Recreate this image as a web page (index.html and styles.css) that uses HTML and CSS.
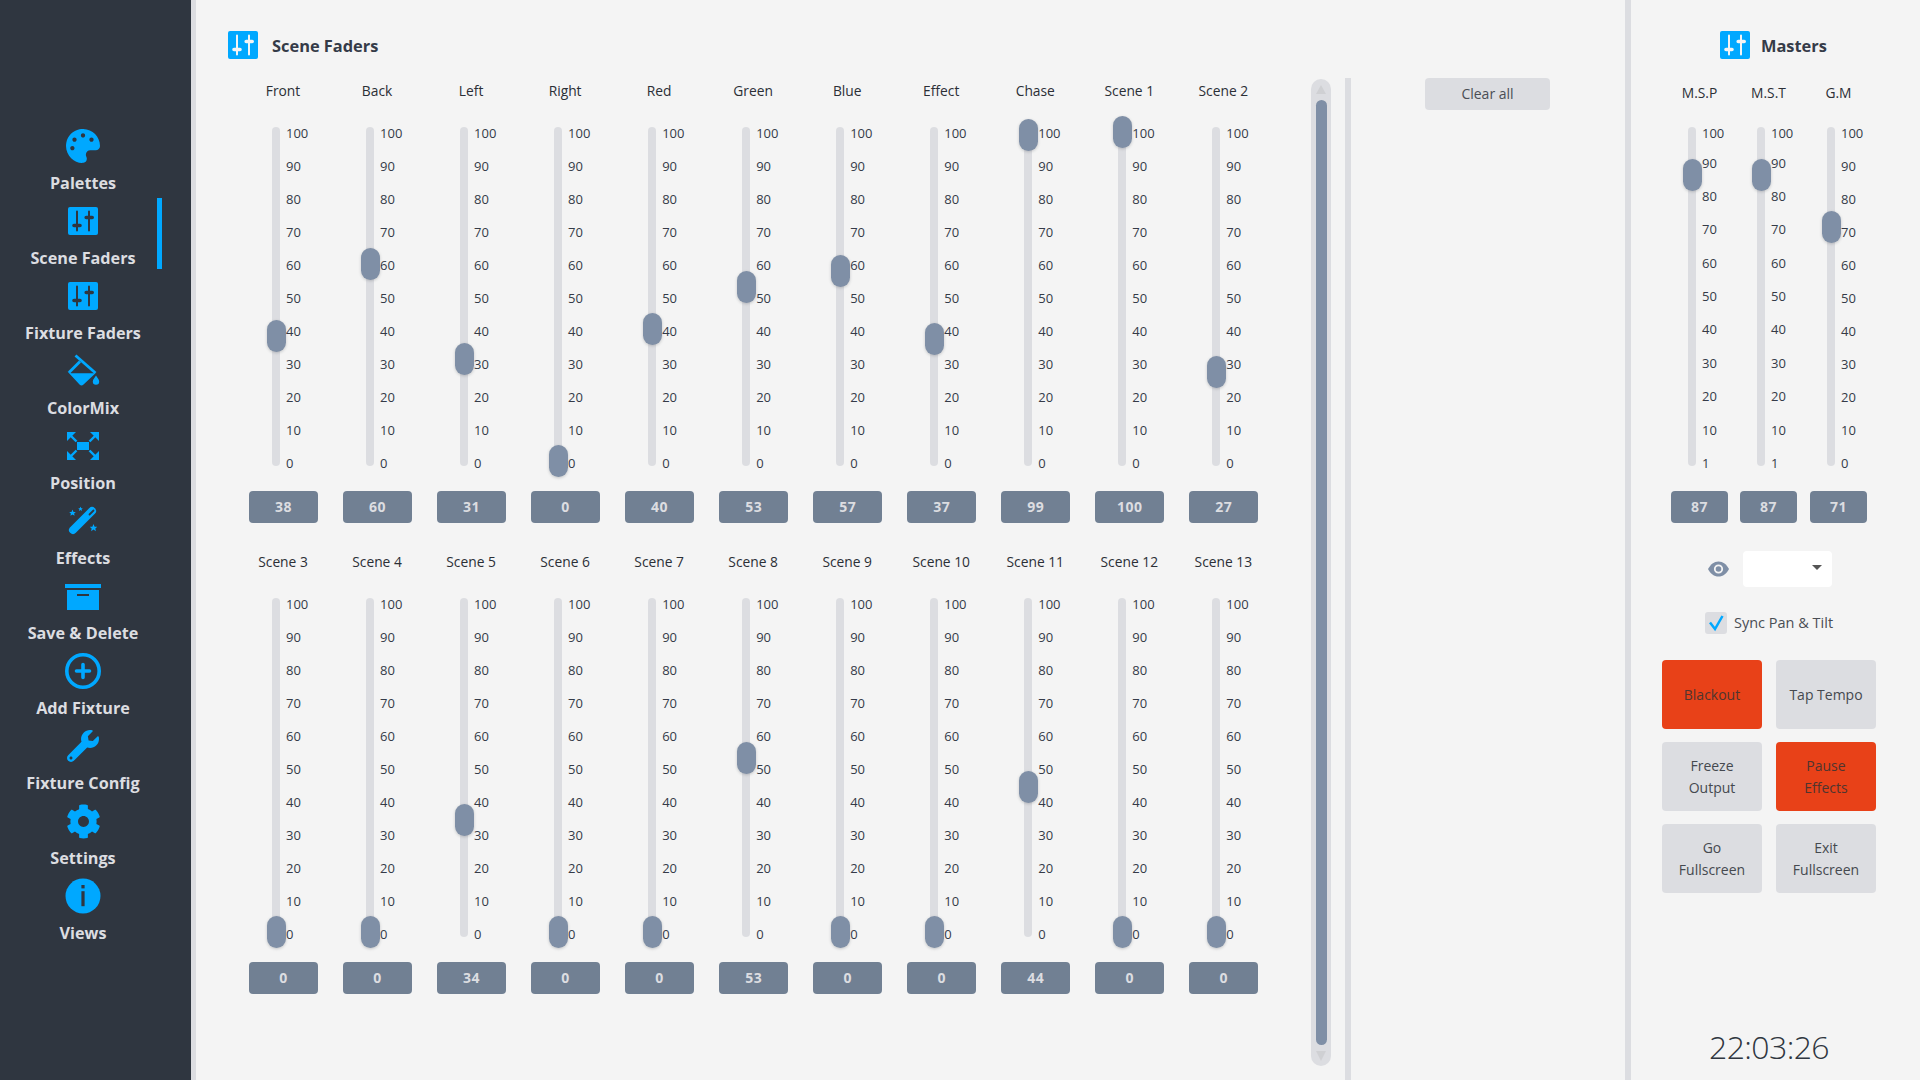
FILE: index.html
```html
<!DOCTYPE html>
<html lang="en">
<head>
<meta charset="utf-8">
<title>Scene Faders</title>
<link rel="stylesheet" href="styles.css">
</head>
<body>
<svg class="defs" width="0" height="0" aria-hidden="true">
  <symbol id="sliders" viewBox="0 0 30 28">
    <rect width="30" height="28" rx="2" fill="#00a8ff"/>
    <g fill="none" stroke="currentColor" stroke-linecap="round">
      <path d="M9 4.500v19M21 4.500v19" stroke-width="2"/>
      <path d="M6 18.500h6M18.200 10.500h6" stroke-width="3.600"/>
    </g>
  </symbol>
  <symbol id="star" viewBox="-1 -1 2 2">
    <polygon points="0,-1 .29,-.31 .95,-.31 .47,.12 .59,.81 0,.4 -.59,.81 -.47,.12 -.95,-.31 -.29,-.31"/>
  </symbol>
</svg>
<div class="app">
  <aside class="sidebar">
    <nav class="nav">
      <a class="nav-item"><span class="nav-icon"><svg width="34" height="34" viewBox="0 0 512 512"><path d="M204.300 5C104.900 24.400 24.800 104.300 5.200 203.400c-37 187 131.700 326.400 258.800 306.700 41.200-6.400 61.400-54.600 42.500-91.700-23.100-45.400 9.900-98.400 60.900-98.400h79.700c35.800 0 64.800-29.600 64.900-65.300C511.500 97.100 368.100-26.900 204.300 5zM96 320c-17.700 0-32-14.300-32-32s14.300-32 32-32 32 14.300 32 32-14.300 32-32 32zm32-128c-17.700 0-32-14.300-32-32s14.300-32 32-32 32 14.300 32 32-14.300 32-32 32zm128-64c-17.700 0-32-14.300-32-32s14.300-32 32-32 32 14.300 32 32-14.300 32-32 32zm128 64c-17.700 0-32-14.300-32-32s14.300-32 32-32 32 14.300 32 32-14.300 32-32 32z"/></svg></span><span class="nav-label">Palettes</span></a>
      <a class="nav-item is-active"><span class="nav-icon on-dark"><svg width="30" height="28"><use href="#sliders"/></svg></span><span class="nav-label">Scene Faders</span></a>
      <a class="nav-item"><span class="nav-icon on-dark"><svg width="30" height="28"><use href="#sliders"/></svg></span><span class="nav-label">Fixture Faders</span></a>
      <a class="nav-item"><span class="nav-icon"><svg width="36" height="36" viewBox="5 3 36 36"><path d="M15.500 5.500L35.500 23" fill="none" stroke="#00a8ff" stroke-width="2.800"/><path d="M9 22.500L20 11.500" fill="none" stroke="#00a8ff" stroke-width="2.800"/><path d="M7.500 21.500L11 23.200h24.500L23.500 34.500a3 3 0 0 1-4 0z"/><path d="M36 25.500c1.500 2.500 3.200 4 3.200 6a3.200 3.200 0 0 1-6.400 0c0-2 1.700-3.500 3.200-6z"/></svg></span><span class="nav-label">ColorMix</span></a>
      <a class="nav-item"><span class="nav-icon"><svg width="36" height="36" viewBox="-18 -18 36 36"><rect x="-6" y="-4" width="12" height="8"/><polygon points="-16,-14 -7,-14 -16,-5"/><path d="M-13-11l6.500 6.500" stroke="#00a8ff" stroke-width="2.400"/><polygon points="16,-14 7,-14 16,-5"/><path d="M13-11l-6.500 6.500" stroke="#00a8ff" stroke-width="2.400"/><polygon points="-16,14 -7,14 -16,5"/><path d="M-13 11l6.500-6.500" stroke="#00a8ff" stroke-width="2.400"/><polygon points="16,14 7,14 16,5"/><path d="M13 11l-6.500-6.500" stroke="#00a8ff" stroke-width="2.400"/></svg></span><span class="nav-label">Position</span></a>
      <a class="nav-item"><span class="nav-icon"><svg width="36" height="36" viewBox="5 3 36 36"><path d="M13 30L32 11" stroke="#00a8ff" stroke-width="8" stroke-linecap="round"/><path d="M29.500 14.500l4-4" stroke="#2f3640" stroke-width="1.800" stroke-linecap="round"/><use href="#star" x="9" y="9.500" width="7" height="7"/><use href="#star" x="18" y="6.500" width="5" height="5"/><use href="#star" x="29.500" y="24" width="8" height="8"/></svg></span><span class="nav-label">Effects</span></a>
      <a class="nav-item"><span class="nav-icon"><svg width="36" height="36" viewBox="-18 -18 36 36"><rect x="-18" y="-12" width="36" height="4"/><rect x="-16" y="-6" width="32" height="20"/><rect x="-6" y="-2" width="12" height="2" fill="#2f3640"/></svg></span><span class="nav-label">Save &amp; Delete</span></a>
      <a class="nav-item"><span class="nav-icon"><svg width="36" height="36" viewBox="-18 -18 36 36"><circle r="16.200" fill="none" stroke="#00a8ff" stroke-width="3.600"/><path d="M-6.500 0h13M0-6.500v13" stroke="#00a8ff" stroke-width="3.600" stroke-linecap="round"/></svg></span><span class="nav-label">Add Fixture</span></a>
      <a class="nav-item"><span class="nav-icon"><svg width="32" height="32" viewBox="0 0 512 512"><path d="M507.730 109.100c-2.240-9.030-13.540-12.090-20.120-5.510l-74.360 74.360-67.880-11.310-11.310-67.880 74.360-74.360c6.620-6.620 3.430-17.900-5.660-20.160-47.380-11.740-99.550.91-136.580 37.930-39.640 39.640-50.550 97.100-34.050 147.200L18.740 402.760c-24.990 24.990-24.990 65.510 0 90.500 24.990 24.990 65.510 24.990 90.500 0l213.210-213.210c50.120 16.710 107.470 5.680 147.370-34.220 37.070-37.070 49.700-89.320 37.910-136.730zM64 472c-13.250 0-24-10.750-24-24 0-13.260 10.750-24 24-24s24 10.740 24 24c0 13.250-10.750 24-24 24z"/></svg></span><span class="nav-label">Fixture Config</span></a>
      <a class="nav-item"><span class="nav-icon"><svg width="35" height="35" viewBox="0 0 512 512"><path d="M487.400 315.700l-42.600-24.600c4.300-23.200 4.300-47 0-70.200l42.600-24.600c4.900-2.800 7.100-8.600 5.500-14-11.100-35.600-30-67.800-54.700-94.600-3.800-4.100-10-5.100-14.800-2.300L380.800 110c-17.900-15.400-38.500-27.300-60.800-35.100V25.800c0-5.600-3.900-10.500-9.400-11.700-36.700-8.200-74.300-7.800-109.200 0-5.500 1.200-9.400 6.100-9.400 11.700V75c-22.200 7.900-42.800 19.800-60.800 35.100L88.700 85.500c-4.900-2.800-11-1.900-14.800 2.300-24.700 26.700-43.600 58.900-54.700 94.600-1.700 5.400.6 11.200 5.500 14L67.300 221c-4.300 23.200-4.300 47 0 70.200l-42.600 24.600c-4.900 2.800-7.100 8.600-5.500 14 11.100 35.600 30 67.800 54.700 94.600 3.800 4.100 10 5.100 14.800 2.300l42.600-24.600c17.900 15.400 38.500 27.300 60.800 35.100v49.200c0 5.600 3.900 10.500 9.400 11.700 36.700 8.200 74.300 7.800 109.200 0 5.500-1.200 9.400-6.100 9.400-11.700v-49.200c22.200-7.900 42.800-19.800 60.800-35.100l42.600 24.600c4.900 2.800 11 1.900 14.800-2.300 24.700-26.700 43.600-58.900 54.700-94.600 1.500-5.500-.7-11.300-5.600-14.100zM256 336c-44.100 0-80-35.900-80-80s35.900-80 80-80 80 35.900 80 80-35.900 80-80 80z"/></svg></span><span class="nav-label">Settings</span></a>
      <a class="nav-item"><span class="nav-icon"><svg width="36" height="36" viewBox="-18 -18 36 36"><circle r="17.500"/><rect x="-1.600" y="-11" width="3.200" height="3.400" fill="#2f3640"/><rect x="-1.600" y="-4.800" width="3.200" height="15" fill="#2f3640"/></svg></span><span class="nav-label">Views</span></a>
    </nav>
  </aside>

  <main class="main">
    <header class="pane-head">
      <svg class="head-icon" width="30" height="28"><use href="#sliders"/></svg>
      <h1 class="pane-title">Scene Faders</h1>
    </header>
    <div class="main-body">
      <div class="fader-grid">
        <section class="fader"><div class="fader-name">Front</div><div class="fader-body"><div class="track"><div class="rail"><span class="thumb" style="bottom:38%"></span></div></div><ol class="ticks"><li>100</li><li>90</li><li>80</li><li>70</li><li>60</li><li>50</li><li>40</li><li>30</li><li>20</li><li>10</li><li>0</li></ol></div><div class="value">38</div></section>
        <section class="fader"><div class="fader-name">Back</div><div class="fader-body"><div class="track"><div class="rail"><span class="thumb" style="bottom:60%"></span></div></div><ol class="ticks"><li>100</li><li>90</li><li>80</li><li>70</li><li>60</li><li>50</li><li>40</li><li>30</li><li>20</li><li>10</li><li>0</li></ol></div><div class="value">60</div></section>
        <section class="fader"><div class="fader-name">Left</div><div class="fader-body"><div class="track"><div class="rail"><span class="thumb" style="bottom:31%"></span></div></div><ol class="ticks"><li>100</li><li>90</li><li>80</li><li>70</li><li>60</li><li>50</li><li>40</li><li>30</li><li>20</li><li>10</li><li>0</li></ol></div><div class="value">31</div></section>
        <section class="fader"><div class="fader-name">Right</div><div class="fader-body"><div class="track"><div class="rail"><span class="thumb" style="bottom:0%"></span></div></div><ol class="ticks"><li>100</li><li>90</li><li>80</li><li>70</li><li>60</li><li>50</li><li>40</li><li>30</li><li>20</li><li>10</li><li>0</li></ol></div><div class="value">0</div></section>
        <section class="fader"><div class="fader-name">Red</div><div class="fader-body"><div class="track"><div class="rail"><span class="thumb" style="bottom:40%"></span></div></div><ol class="ticks"><li>100</li><li>90</li><li>80</li><li>70</li><li>60</li><li>50</li><li>40</li><li>30</li><li>20</li><li>10</li><li>0</li></ol></div><div class="value">40</div></section>
        <section class="fader"><div class="fader-name">Green</div><div class="fader-body"><div class="track"><div class="rail"><span class="thumb" style="bottom:53%"></span></div></div><ol class="ticks"><li>100</li><li>90</li><li>80</li><li>70</li><li>60</li><li>50</li><li>40</li><li>30</li><li>20</li><li>10</li><li>0</li></ol></div><div class="value">53</div></section>
        <section class="fader"><div class="fader-name">Blue</div><div class="fader-body"><div class="track"><div class="rail"><span class="thumb" style="bottom:57.800%"></span></div></div><ol class="ticks"><li>100</li><li>90</li><li>80</li><li>70</li><li>60</li><li>50</li><li>40</li><li>30</li><li>20</li><li>10</li><li>0</li></ol></div><div class="value">57</div></section>
        <section class="fader"><div class="fader-name">Effect</div><div class="fader-body"><div class="track"><div class="rail"><span class="thumb" style="bottom:37%"></span></div></div><ol class="ticks"><li>100</li><li>90</li><li>80</li><li>70</li><li>60</li><li>50</li><li>40</li><li>30</li><li>20</li><li>10</li><li>0</li></ol></div><div class="value">37</div></section>
        <section class="fader"><div class="fader-name">Chase</div><div class="fader-body"><div class="track"><div class="rail"><span class="thumb" style="bottom:99%"></span></div></div><ol class="ticks"><li>100</li><li>90</li><li>80</li><li>70</li><li>60</li><li>50</li><li>40</li><li>30</li><li>20</li><li>10</li><li>0</li></ol></div><div class="value">99</div></section>
        <section class="fader"><div class="fader-name">Scene 1</div><div class="fader-body"><div class="track"><div class="rail"><span class="thumb" style="bottom:100%"></span></div></div><ol class="ticks"><li>100</li><li>90</li><li>80</li><li>70</li><li>60</li><li>50</li><li>40</li><li>30</li><li>20</li><li>10</li><li>0</li></ol></div><div class="value">100</div></section>
        <section class="fader"><div class="fader-name">Scene 2</div><div class="fader-body"><div class="track"><div class="rail"><span class="thumb" style="bottom:27%"></span></div></div><ol class="ticks"><li>100</li><li>90</li><li>80</li><li>70</li><li>60</li><li>50</li><li>40</li><li>30</li><li>20</li><li>10</li><li>0</li></ol></div><div class="value">27</div></section>
        <section class="fader"><div class="fader-name">Scene 3</div><div class="fader-body"><div class="track"><div class="rail"><span class="thumb" style="bottom:0%"></span></div></div><ol class="ticks"><li>100</li><li>90</li><li>80</li><li>70</li><li>60</li><li>50</li><li>40</li><li>30</li><li>20</li><li>10</li><li>0</li></ol></div><div class="value">0</div></section>
        <section class="fader"><div class="fader-name">Scene 4</div><div class="fader-body"><div class="track"><div class="rail"><span class="thumb" style="bottom:0%"></span></div></div><ol class="ticks"><li>100</li><li>90</li><li>80</li><li>70</li><li>60</li><li>50</li><li>40</li><li>30</li><li>20</li><li>10</li><li>0</li></ol></div><div class="value">0</div></section>
        <section class="fader"><div class="fader-name">Scene 5</div><div class="fader-body"><div class="track"><div class="rail"><span class="thumb" style="bottom:34%"></span></div></div><ol class="ticks"><li>100</li><li>90</li><li>80</li><li>70</li><li>60</li><li>50</li><li>40</li><li>30</li><li>20</li><li>10</li><li>0</li></ol></div><div class="value">34</div></section>
        <section class="fader"><div class="fader-name">Scene 6</div><div class="fader-body"><div class="track"><div class="rail"><span class="thumb" style="bottom:0%"></span></div></div><ol class="ticks"><li>100</li><li>90</li><li>80</li><li>70</li><li>60</li><li>50</li><li>40</li><li>30</li><li>20</li><li>10</li><li>0</li></ol></div><div class="value">0</div></section>
        <section class="fader"><div class="fader-name">Scene 7</div><div class="fader-body"><div class="track"><div class="rail"><span class="thumb" style="bottom:0%"></span></div></div><ol class="ticks"><li>100</li><li>90</li><li>80</li><li>70</li><li>60</li><li>50</li><li>40</li><li>30</li><li>20</li><li>10</li><li>0</li></ol></div><div class="value">0</div></section>
        <section class="fader"><div class="fader-name">Scene 8</div><div class="fader-body"><div class="track"><div class="rail"><span class="thumb" style="bottom:53%"></span></div></div><ol class="ticks"><li>100</li><li>90</li><li>80</li><li>70</li><li>60</li><li>50</li><li>40</li><li>30</li><li>20</li><li>10</li><li>0</li></ol></div><div class="value">53</div></section>
        <section class="fader"><div class="fader-name">Scene 9</div><div class="fader-body"><div class="track"><div class="rail"><span class="thumb" style="bottom:0%"></span></div></div><ol class="ticks"><li>100</li><li>90</li><li>80</li><li>70</li><li>60</li><li>50</li><li>40</li><li>30</li><li>20</li><li>10</li><li>0</li></ol></div><div class="value">0</div></section>
        <section class="fader"><div class="fader-name">Scene 10</div><div class="fader-body"><div class="track"><div class="rail"><span class="thumb" style="bottom:0%"></span></div></div><ol class="ticks"><li>100</li><li>90</li><li>80</li><li>70</li><li>60</li><li>50</li><li>40</li><li>30</li><li>20</li><li>10</li><li>0</li></ol></div><div class="value">0</div></section>
        <section class="fader"><div class="fader-name">Scene 11</div><div class="fader-body"><div class="track"><div class="rail"><span class="thumb" style="bottom:44%"></span></div></div><ol class="ticks"><li>100</li><li>90</li><li>80</li><li>70</li><li>60</li><li>50</li><li>40</li><li>30</li><li>20</li><li>10</li><li>0</li></ol></div><div class="value">44</div></section>
        <section class="fader"><div class="fader-name">Scene 12</div><div class="fader-body"><div class="track"><div class="rail"><span class="thumb" style="bottom:0%"></span></div></div><ol class="ticks"><li>100</li><li>90</li><li>80</li><li>70</li><li>60</li><li>50</li><li>40</li><li>30</li><li>20</li><li>10</li><li>0</li></ol></div><div class="value">0</div></section>
        <section class="fader"><div class="fader-name">Scene 13</div><div class="fader-body"><div class="track"><div class="rail"><span class="thumb" style="bottom:0%"></span></div></div><ol class="ticks"><li>100</li><li>90</li><li>80</li><li>70</li><li>60</li><li>50</li><li>40</li><li>30</li><li>20</li><li>10</li><li>0</li></ol></div><div class="value">0</div></section>
      </div>
      <div class="scrollbar"><span class="scroll-up"></span><span class="scroll-thumb"></span><span class="scroll-down"></span></div>
      <div class="divider"></div>
      <button class="btn-clear">Clear all</button>
    </div>
  </main>

  <aside class="masters">
    <header class="pane-head masters-head">
      <svg class="head-icon" width="30" height="28"><use href="#sliders"/></svg>
      <h2 class="pane-title">Masters</h2>
    </header>
    <div class="master-row">
      <section class="master"><div class="fader-name">M.S.P</div><div class="fader-body"><div class="track"><div class="rail"><span class="thumb" style="bottom:86.87%"></span></div></div><ol class="ticks ticks-log"><li>100</li><li>90</li><li>80</li><li>70</li><li>60</li><li>50</li><li>40</li><li>30</li><li>20</li><li>10</li><li>1</li></ol></div><div class="value">87</div></section>
      <section class="master"><div class="fader-name">M.S.T</div><div class="fader-body"><div class="track"><div class="rail"><span class="thumb" style="bottom:86.87%"></span></div></div><ol class="ticks ticks-log"><li>100</li><li>90</li><li>80</li><li>70</li><li>60</li><li>50</li><li>40</li><li>30</li><li>20</li><li>10</li><li>1</li></ol></div><div class="value">87</div></section>
      <section class="master"><div class="fader-name">G.M</div><div class="fader-body"><div class="track"><div class="rail"><span class="thumb" style="bottom:71%"></span></div></div><ol class="ticks"><li>100</li><li>90</li><li>80</li><li>70</li><li>60</li><li>50</li><li>40</li><li>30</li><li>20</li><li>10</li><li>0</li></ol></div><div class="value">71</div></section>
    </div>
    <div class="view-row">
      <svg class="eye" width="21" height="16" viewBox="0 0 21 16"><path d="M0 8C2.500 3.200 6 .4 10.500.4S18.500 3.200 21 8C18.500 12.800 15 15.600 10.500 15.600S2.500 12.800 0 8z"/><circle cx="10.500" cy="8" r="3.700" fill="none" stroke="#f4f4f4" stroke-width="1.800"/></svg>
      <div class="select"><span class="caret"></span></div>
    </div>
    <label class="sync">
      <span class="checkbox"><svg width="22" height="22" viewBox="0 0 22 22"><path d="M5 10.500l5 6.500 7.500-13" fill="none" stroke="#00a8ff" stroke-width="2.500"/></svg></span>
      <span class="sync-text">Sync Pan &amp; Tilt</span>
    </label>
    <div class="actions">
      <button class="action is-on">Blackout</button>
      <button class="action">Tap Tempo</button>
      <button class="action">Freeze<br>Output</button>
      <button class="action is-on">Pause<br>Effects</button>
      <button class="action">Go<br>Fullscreen</button>
      <button class="action">Exit<br>Fullscreen</button>
    </div>
    <div class="clock">22:03:26</div>
  </aside>
</div>
</body>
</html>
```
FILE: styles.css
```css
* { box-sizing: border-box; }
html, body { margin: 0; padding: 0; height: 100%; overflow: hidden; }
body {
  font-family: "Open Sans", "Noto Sans", sans-serif;
  background: #f4f4f4;
  color: #2f3640;
}
.defs { position: absolute; }
.app { display: flex; height: 1080px; width: 1920px; }

/* sidebar */
.sidebar {
  width: 196px;
  flex: none;
  background: #2f3640;
  border-right: 5px solid #dcdde1;
}
.nav { width: 166px; padding-top: 128px; }
.nav-item {
  position: relative;
  display: flex;
  flex-direction: column;
  align-items: center;
  height: 75px;
}
.nav-icon {
  display: flex;
  align-items: center;
  justify-content: center;
  height: 36px;
  fill: #00a8ff;
  line-height: 0;
}
.nav-icon.on-dark { color: #2f3640; }
.nav-label {
  margin-top: 8px;
  font-size: 16.200px;
  line-height: 22px;
  font-weight: 700;
  color: #dcdde1;
  white-space: nowrap;
}
.nav-item.is-active::after {
  content: "";
  position: absolute;
  left: 157px;
  top: -5px;
  width: 5px;
  height: 71px;
  background: #00a8ff;
}

/* main */
.main { flex: 1; min-width: 0; padding-top: 31px; }
.pane-head { display: flex; align-items: center; gap: 14px; height: 28px; padding-left: 32px; }
.head-icon { color: #f4f4f4; flex: none; }
.pane-title {
  margin: 0;
  padding-top: 2px;
  font-size: 16.400px;
  font-weight: 700;
  line-height: 28px;
  color: #353b48;
}
.main-body { display: flex; align-items: flex-start; margin-top: 19px; height: 1002px; }
.fader-grid {
  width: 1115px;
  flex: none;
  padding: 1px 0 0 40px;
  display: grid;
  grid-template-columns: repeat(11, 94.040px);
  row-gap: 27px;
}
.fader-name {
  height: 22px;
  font-size: 13.800px;
  line-height: 24px;
  text-align: center;
  color: #2b2f36;
  white-space: nowrap;
}
.fader-body {
  display: flex;
  gap: 6px;
  height: 339px;
  margin-top: 26px;
  padding-left: 36px;
}
.track {
  position: relative;
  width: 8px;
  height: 339px;
  flex: none;
  background: #dcdde1;
  border-radius: 4px;
}
.rail { position: absolute; top: 5px; bottom: 5px; left: 0; right: 0; }
.thumb {
  position: absolute;
  left: -5px;
  width: 19px;
  height: 32px;
  border-radius: 10px;
  background: #7f8fa6;
  transform: translateY(50%);
  box-shadow: 0 1px 3px rgba(47, 54, 64, .25);
}
.ticks {
  list-style: none;
  margin: -10.500px 0 0;
  padding: 0;
  font-size: 13px;
  color: #353b48;
}
.ticks li { height: 33px; line-height: 33px; }
.ticks-log li { height: 33.400px; }
.ticks-log li:first-child { height: 30px; }
.value {
  width: 69px;
  height: 32px;
  margin: 25px 0 0 13px;
  border-radius: 4px;
  background: #718093;
  color: #dcdde1;
  font-family: "Open Sans", sans-serif;
  font-weight: 700;
  font-size: 14px;
  letter-spacing: .5px;
  line-height: 32px;
  text-align: center;
}

.scrollbar {
  position: relative;
  flex: none;
  width: 20px;
  height: 987px;
  margin-top: 1px;
  padding: 21px 4px 0 5px;
  border-radius: 10px;
  background: #dcdde1;
}
.scroll-thumb { display: block; width: 11px; height: 945px; border-radius: 6px; background: #7f8fa6; }
.scroll-up, .scroll-down {
  position: absolute;
  left: 5px;
  width: 0;
  height: 0;
  border-left: 5px solid transparent;
  border-right: 5px solid transparent;
}
.scroll-up { top: 6px; border-bottom: 9px solid #cfd0d3; }
.scroll-down { bottom: 5px; border-top: 10px solid #cfd0d3; }
.divider { flex: none; width: 6px; height: 1002px; margin-left: 14px; background: #dcdde1; }
.btn-clear {
  flex: none;
  width: 125px;
  height: 32px;
  margin-left: 74px;
  padding: 0;
  border: 0;
  border-radius: 4px;
  background: #dcdde1;
  color: #4a4e55;
  font: 400 14px/32px "Open Sans", sans-serif;
}

/* masters */
.masters {
  flex: none;
  width: 295px;
  border-left: 6px solid #dcdde1;
  padding: 31px 0 0 31px;
}
.masters-head { padding-left: 58px; gap: 11px; }
.master-row { display: flex; gap: 12px; width: 196px; margin: 23px 0 0 9px; }
.master { width: 57px; flex: none; }
.master:last-child { margin-left: 1px; }
.master .fader-name { line-height: 22px; }
.master .fader-body { margin-top: 23px; padding-left: 17px; }
.master .value { width: 57px; margin-left: 0; }
.view-row { display: flex; align-items: center; gap: 14px; margin: 28px 0 0 46px; height: 36px; }
.eye { fill: #7f8fa6; flex: none; }
.select { position: relative; width: 89px; height: 36px; background: #fff; border-radius: 4px; }
.caret {
  position: absolute;
  right: 10px;
  top: 14px;
  border-left: 5px solid transparent;
  border-right: 5px solid transparent;
  border-top: 5px solid #555;
}
.sync { display: flex; align-items: center; gap: 7px; margin: 25px 0 0 43px; height: 22px; }
.checkbox { width: 22px; height: 22px; background: #dcdde1; border-radius: 3px; line-height: 0; }
.sync-text { font-size: 14.500px; line-height: 22px; color: #4a4e55; white-space: nowrap; }
.actions {
  display: grid;
  grid-template-columns: 100px 100px;
  grid-auto-rows: 69px;
  column-gap: 14px;
  row-gap: 13px;
  margin-top: 26px;
  width: 214px;
}
.action {
  border: 0;
  padding: 0;
  border-radius: 4px;
  background: #dcdde1;
  color: #45494f;
  font: 400 14px/22px "Open Sans", sans-serif;
}
.action.is-on { background: #e84118; color: #4f352f; }
.clock {
  width: 214px;
  margin-top: 134px;
  font-size: 32px;
  font-weight: 300;
  letter-spacing: -.6px;
  line-height: 40px;
  text-align: center;
  color: #2f3640;
}
```
